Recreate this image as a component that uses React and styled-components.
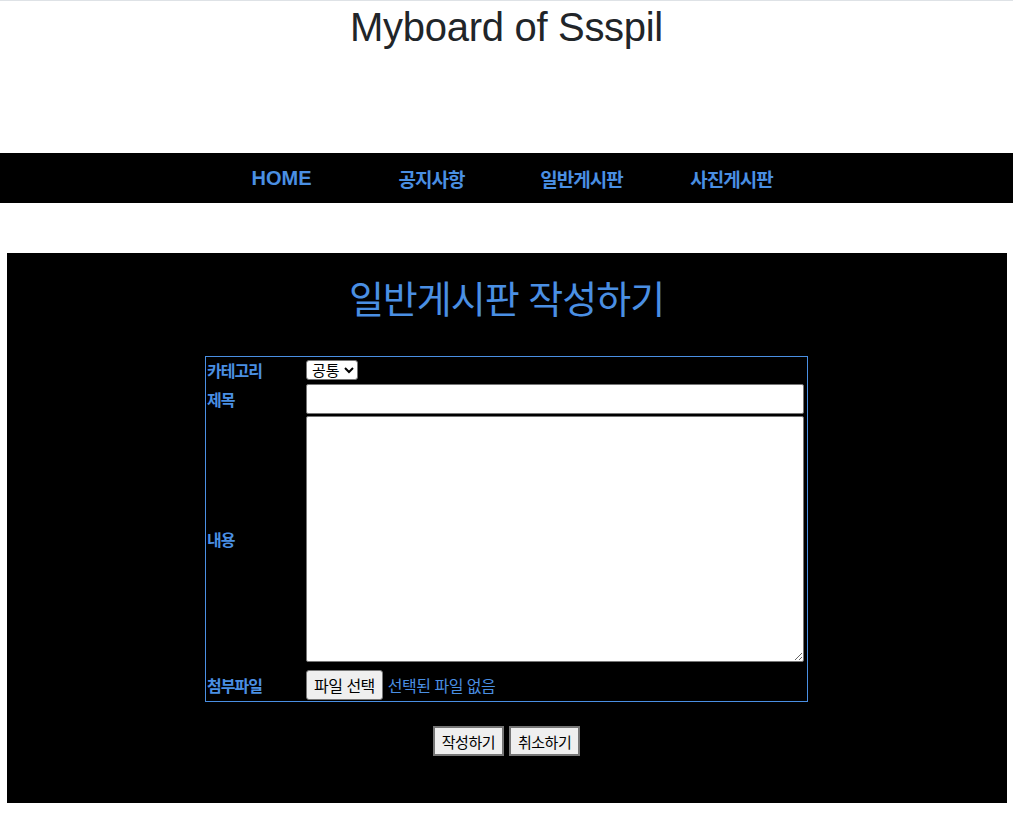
import React from 'react';
import styled, { createGlobalStyle } from 'styled-components';

const GlobalStyle = createGlobalStyle`
  body {
    margin: 0;
    background: #fff;
    font-family: 'Liberation Sans', 'Noto Sans CJK KR', sans-serif;
  }
`;

const BLUE = '#4a8fe3';

const Header = styled.header`
  height: 152px;
  border-top: 1px solid #dee2e6;
  text-align: center;
`;

const Title = styled.h1`
  margin: 0;
  padding-top: 2px;
  font-size: 40px;
  line-height: 48px;
  font-weight: 500;
  color: #212529;
  letter-spacing: -0.3px;
`;

const Nav = styled.nav`
  height: 50px;
  background: #000;
  display: flex;
  justify-content: center;
  align-items: center;
`;

const NavItem = styled.a`
  width: 150px;
  text-align: center;
  color: ${BLUE};
  font-weight: bold;
  font-size: ${(p) => (p.latin ? '20px' : '19px')};
  letter-spacing: ${(p) => (p.latin ? '0' : '-1px')};
  text-decoration: none;
  cursor: pointer;
`;

const Section = styled.section`
  width: 1000px;
  height: 550px;
  margin: 50px auto 0;
  padding-top: 25px;
  box-sizing: border-box;
  background: #000;
`;

const Heading = styled.h2`
  margin: 0;
  text-align: center;
  color: ${BLUE};
  font-size: 38px;
  line-height: 44px;
  font-weight: normal;
  letter-spacing: -1px;
`;

const FormTable = styled.div`
  width: 600px;
  margin: 34px auto 0;
  border: 1px solid ${BLUE};
  padding: 1px 1px 1px 0;
  display: grid;
  grid-template-columns: 100px 1fr;
  row-gap: 2px;
  align-items: center;
`;

const Label = styled.div`
  color: ${BLUE};
  font-weight: bold;
  font-size: 16px;
  letter-spacing: -1px;
  padding-left: 1px;
  padding-top: ${(p) => p.top || 0}px;
`;

const Cell = styled.div`
  display: flex;
  align-items: center;
  gap: 5px;
  padding-top: ${(p) => p.top || 0}px;
`;

const Select = styled.select`
  height: 20px;
  margin: 2px 0;
  font-family: inherit;
  font-size: 15px;
  background: #fff;
  color: #000;
  border: 1px solid #767676;
  border-radius: 3px;
  padding: 0 1px;
`;

const TextInput = styled.input`
  width: 498px;
  height: 30px;
  box-sizing: border-box;
  border: 1px solid #767676;
  border-radius: 2px;
  background: #fff;
  padding: 1px 4px;
  font-size: 14px;
`;

const TextArea = styled.textarea`
  display: block;
  width: 498px;
  height: 246px;
  box-sizing: border-box;
  border: 1px solid #767676;
  border-radius: 2px;
  background: #fff;
  padding: 2px 4px;
  font-size: 14px;
`;

const Button = styled.button`
  height: 30px;
  padding: 0 7px;
  background: #efefef;
  color: #000;
  border: ${(p) => (p.thin ? '1px solid #767676' : '2px solid #767676')};
  border-radius: ${(p) => (p.thin ? '3px' : '0')};
  font-family: inherit;
  font-size: ${(p) => (p.thin ? '16px' : '15px')};
  letter-spacing: -0.5px;
  cursor: pointer;
`;

const FileHint = styled.span`
  color: ${BLUE};
  font-size: 16px;
  letter-spacing: -0.5px;
`;

const ButtonRow = styled.div`
  margin-top: 24px;
  display: flex;
  justify-content: center;
  gap: 5px;
`;

const menus = ['HOME', '공지사항', '일반게시판', '사진게시판'];

export default function App() {
  return (
    <>
      <GlobalStyle />
      <Header>
        <Title>Myboard of Ssspil</Title>
      </Header>
      <Nav>
        {menus.map((m) => (
          <NavItem key={m} latin={m === 'HOME' ? 1 : 0}>
            {m}
          </NavItem>
        ))}
      </Nav>
      <Section>
        <Heading>일반게시판 작성하기</Heading>
        <FormTable>
          <Label>카테고리</Label>
          <Cell>
            <Select defaultValue="common">
              <option value="common">공통</option>
              <option value="free">자유</option>
            </Select>
          </Cell>
          <Label>제목</Label>
          <Cell>
            <TextInput type="text" />
          </Cell>
          <Label>내용</Label>
          <Cell>
            <TextArea />
          </Cell>
          <Label top={6}>첨부파일</Label>
          <Cell top={6}>
            <Button thin type="button">파일 선택</Button>
            <FileHint>선택된 파일 없음</FileHint>
          </Cell>
        </FormTable>
        <ButtonRow>
          <Button type="button">작성하기</Button>
          <Button type="button">취소하기</Button>
        </ButtonRow>
      </Section>
    </>
  );
}
